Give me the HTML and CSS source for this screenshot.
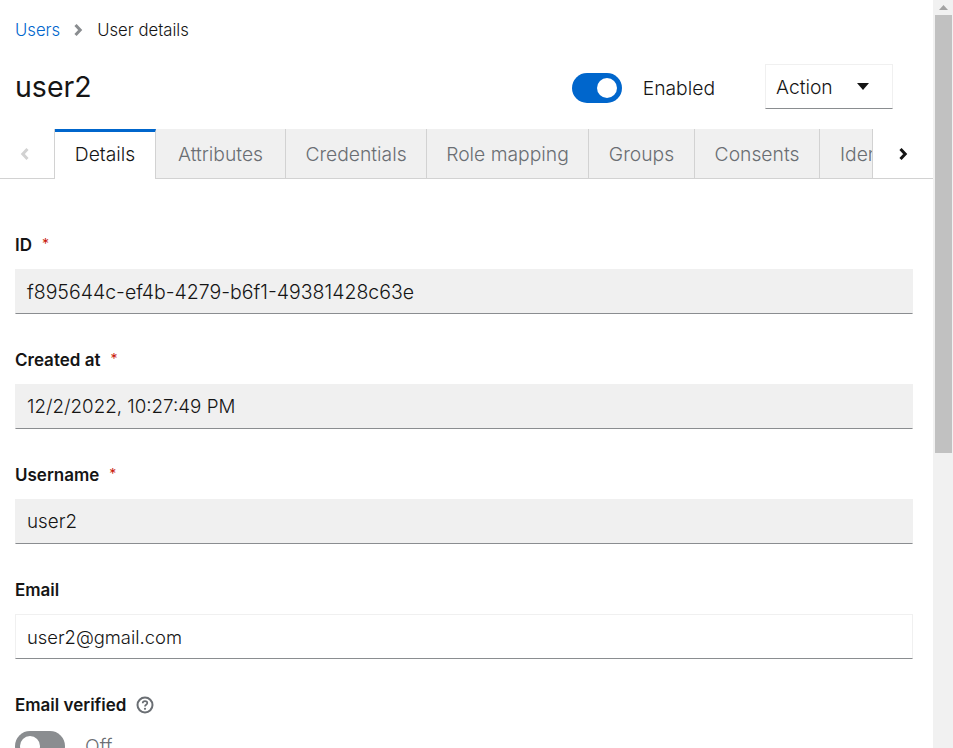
FILE: index.html
```html
<!DOCTYPE html>
<html lang="en">
<head>
<meta charset="utf-8">
<title>User details</title>
<link rel="stylesheet" href="styles.css">
</head>
<body>
<div class="app">
  <main class="page">
    <nav class="crumbs">
      <a class="crumb-link">Users</a>
      <svg class="crumb-sep" viewBox="0 0 10 14" width="10" height="14"><path d="M2.500 2 7.200 7l-4.700 5" fill="none" stroke="#8a8d90" stroke-width="3"/></svg>
      <span class="crumb-current">User details</span>
    </nav>
    <header class="head">
      <h1 class="title">user2</h1>
      <div class="head-actions">
        <span class="switch switch-on"><span class="knob"></span></span>
        <span class="switch-label">Enabled</span>
        <div class="action"><span>Action</span><svg class="caret" viewBox="0 0 12 7" width="12" height="7"><path d="M0 0h12L6 7z" fill="#151515"/></svg></div>
      </div>
    </header>
    <div class="tabs">
      <div class="tab-arrow tab-arrow-left"><svg viewBox="0 0 10 14" width="10" height="14"><path d="M7.500 2 2.800 7l4.700 5" fill="none" stroke="#d2d2d2" stroke-width="3"/></svg></div>
      <div class="tab tab-active">Details</div>
      <div class="tab">Attributes</div>
      <div class="tab">Credentials</div>
      <div class="tab">Role mapping</div>
      <div class="tab">Groups</div>
      <div class="tab">Consents</div>
      <div class="tab tab-cut"><span>Identity provider links</span></div>
      <div class="tab-arrow"><svg viewBox="0 0 10 14" width="10" height="14"><path d="M2.500 2 7.200 7l-4.700 5" fill="none" stroke="#151515" stroke-width="3"/></svg></div>
    </div>
    <form class="form">
      <div class="field">
        <div class="label">ID <span class="req">*</span></div>
        <div class="input input-ro input-id">f895644c-ef4b-4279-b6f1-49381428c63e</div>
      </div>
      <div class="field">
        <div class="label">Created at <span class="req">*</span></div>
        <div class="input input-ro">12/2/2022, 10:27:49 PM</div>
      </div>
      <div class="field">
        <div class="label">Username <span class="req">*</span></div>
        <div class="input input-ro">user2</div>
      </div>
      <div class="field">
        <div class="label">Email</div>
        <div class="input input-email">user2@gmail.com</div>
      </div>
      <div class="field">
        <div class="label">Email verified
          <svg class="help" viewBox="0 0 18 18" width="18" height="18"><circle cx="9" cy="9" r="7.500" fill="none" stroke="#6a6e73" stroke-width="2"/><path d="M6.700 7.200c0-1.300 1-2.100 2.300-2.100s2.300.8 2.300 2c0 1.700-2.300 1.700-2.300 3.300" fill="none" stroke="#6a6e73" stroke-width="1.700"/><circle cx="9" cy="12.800" r="1.100" fill="#6a6e73"/></svg>
        </div>
        <div class="toggle-row">
          <span class="switch switch-off"><span class="knob"></span></span>
          <span class="off-label">Off</span>
        </div>
      </div>
    </form>
  </main>
  <div class="scrollbar">
    <div class="scroll-btn"><svg viewBox="0 0 9 5" width="9" height="5"><path d="M4.500 0 9 5H0z" fill="#a3a3a3"/></svg></div>
    <div class="scroll-thumb"></div>
  </div>
</div>
</body>
</html>
```
FILE: styles.css
```css
* { box-sizing: border-box; }
html, body { margin: 0; height: 100%; overflow: hidden; background: #fff; }
body { font-family: Inter, "Open Sans", sans-serif; font-size: 19.300px; font-weight: 300; color: #151515; }
.app { display: flex; height: 748px; }
.page { flex: 1; min-width: 0; overflow: hidden; }
.crumbs { display: flex; align-items: center; height: 20px; margin: 20px 0 0 15px; font-size: 16.700px; }
.crumb-link { color: #06c; }
.crumb-sep { margin: 0 14px 0 13px; }
.head { display: flex; align-items: center; justify-content: space-between; height: 45px; margin-top: 24px; padding: 0 40px 0 15px; }
.title { margin: 0; font-size: 28.500px; font-weight: 400; }
.head-actions { display: flex; align-items: center; }
.switch { display: inline-flex; align-items: center; width: 50px; height: 30px; border-radius: 15px; padding: 0 5px; }
.head-actions .switch, .switch-label { position: relative; top: 1px; }
.switch-on { background: #06c; justify-content: flex-end; }
.switch-off { background: #8a8d90; justify-content: flex-start; }
.knob { width: 20px; height: 20px; border-radius: 50%; background: #fff; }
.switch-label { margin-left: 21px; }
.action { display: flex; align-items: center; justify-content: space-between; width: 128px; height: 45px; margin-left: 50px; padding: 0 23px 0 10px; border: 1px solid #f0f0f0; border-bottom-color: #8a8d90; }
.tabs { display: grid; grid-template-columns: 55px 101px 130px 141px 162px 106px 125px 53px 60px; height: 50px; margin-top: 20px; border-bottom: 1px solid #d2d2d2; }
.tab-arrow { display: flex; align-items: center; justify-content: center; height: 49px; }
.tab-arrow-left { padding-right: 4px; border-right: 1px solid #d2d2d2; }
.tab { display: flex; align-items: center; justify-content: center; height: 49px; background: #f0f0f0; color: #6a6e73; border-right: 1px solid #d2d2d2; white-space: nowrap; }
.tab-active { height: 50px; background: #fff; color: #151515; border-top: 3px solid #06c; padding: 0 0 3px; }
.tab-cut { justify-content: flex-start; min-width: 0; overflow: hidden; padding-left: 20px; }
.form { padding: 0 20px 0 15px; margin-top: 55px; }
.field { margin-bottom: 35px; }
.label { display: flex; align-items: center; height: 22px; font-size: 17px; font-weight: 600; }
.req { margin: -3px 0 0 10px; font-size: 14px; font-weight: 400; color: #c9190b; }
.input { display: flex; align-items: center; height: 45px; margin-top: 13px; padding: 0 11px; font-size: 18.800px; border: 1px solid #f0f0f0; border-bottom-color: #8a8d90; }
.input-id { font-size: 19.500px; }
.input-email { font-size: 18.400px; }
.input-ro { background: #f0f0f0; }
.help { margin-left: 10px; }
.toggle-row { display: flex; align-items: center; margin-top: 15px; }
.off-label { margin-left: 20px; color: #6a6e73; }
.scrollbar { flex: none; display: flex; flex-direction: column; width: 20px; padding: 0 1px 0 2px; background: #f1f1f1; }
.scroll-btn { display: flex; align-items: center; justify-content: center; height: 15px; }
.scroll-thumb { height: 438px; background: #c1c1c1; }
```
